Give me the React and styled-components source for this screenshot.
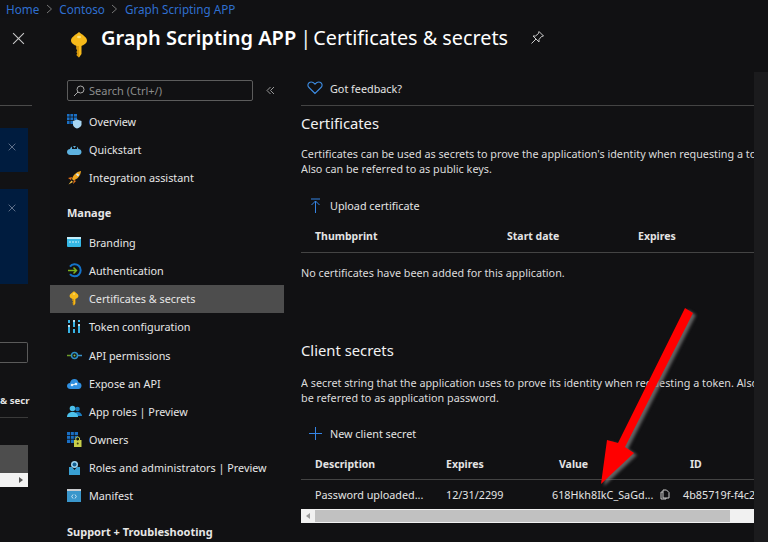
import React from "react";
import styled, { createGlobalStyle } from "styled-components";

const Global = createGlobalStyle`
  html, body { margin: 0; padding: 0; background: #111113; }
  * { box-sizing: border-box; }
`;

const Page = styled.div`
  position: relative;
  width: 768px;
  height: 542px;
  overflow: hidden;
  background: #111113;
  color: #e4e4e4;
  font-family: "Noto Sans", "Open Sans", sans-serif;
  font-size: 10.8px;
  display: flex;
  flex-direction: column;
`;

const Breadcrumb = styled.nav`
  height: 18px;
  padding-left: 6px;
  display: flex;
  align-items: center;
  gap: 6.5px;
  color: #2f6fd0;
  font-size: 11.7px;
  line-height: 18px;
`;
const Chevron = styled.span`
  display: flex;
`;

const Body = styled.div`
  flex: 1;
  min-height: 0;
  display: flex;
`;

const LeftBlade = styled.aside`
  width: 50px;
  flex: none;
  background: #121214;
  padding-right: 22px;
  display: flex;
  flex-direction: column;
`;
const BladeClose = styled.div`
  height: 88px;
  border-bottom: 1px solid #4a4a4a;
  margin-right: -4px;
  padding: 14px 0 0 12px;
  color: #c8c8c8;
`;
const Notice = styled.div`
  height: ${(p) => p.$h}px;
  margin-top: ${(p) => p.$top}px;
  background: #001c3f;
  padding: 11px 0 0 8px;
  color: #8f9bb0;
`;
const BladeInput = styled.div`
  height: 21px;
  margin-top: 58px;
  border: 1px solid #5a5a5a;
  border-left: none;
  border-radius: 0 2px 2px 0;
`;
const BladeHeading = styled.div`
  margin-top: 30px;
  height: 16px;
  line-height: 16px;
  font-weight: 700;
  font-size: 9.6px;
  white-space: nowrap;
`;
const BladeRule = styled.div`
  margin-top: 8px;
  height: 1px;
  background: #3a3a3a;
`;
const BladeGrey = styled.div`
  margin-top: 27px;
  height: 28px;
  background: #4d4d4d;
`;
const BladeScroll = styled.div`
  height: 14px;
  background: #f2f2f2;
  padding-right: 5px;
  display: flex;
  align-items: center;
  justify-content: flex-end;
`;

const Resource = styled.main`
  flex: 1;
  min-width: 0;
  display: flex;
  flex-direction: column;
`;
const TitleRow = styled.header`
  height: 54px;
  padding-left: 20px;
  display: flex;
  align-items: flex-start;
  gap: 13px;
`;
const KeyMark = styled.div`
  margin-top: 14px;
  display: flex;
`;
const Title = styled.h1`
  margin: 4px 0 0;
  font-size: 20px;
  line-height: 32px;
  font-weight: 400;
  color: #fff;
  white-space: nowrap;
  display: flex;
`;
const TitleStrong = styled.span`
  font-weight: 600;
`;
const TitlePipe = styled.span`
  margin-left: 4px;
  color: #e8f2fa;
`;
const TitleLight = styled.span`
  margin-left: 2px;
  font-size: 19.8px;
`;
const PinMark = styled.span`
  display: flex;
  margin-top: 12px;
  margin-left: 9px;
`;

const Columns = styled.div`
  flex: 1;
  min-height: 0;
  display: flex;
`;
const Nav = styled.div`
  width: 234px;
  flex: none;
  padding-top: 8px;
  margin-right: 17px;
`;
const SearchRow = styled.div`
  display: flex;
  align-items: center;
  padding-left: 17px;
  height: 21px;
  margin-bottom: 6px;
`;
const SearchBox = styled.div`
  width: 186px;
  height: 21px;
  border: 1px solid #5c5c5c;
  border-radius: 2px;
  display: flex;
  align-items: center;
  gap: 4px;
  padding-left: 5px;
  color: #8c8c8c;
  font-size: 11px;
`;
const Collapse = styled.span`
  margin-left: 13px;
  display: flex;
`;
const NavRow = styled.div`
  height: 28.15px;
  display: flex;
  align-items: center;
  padding-left: 17px;
  background: ${(p) => (p.$active ? "#4d4d4d" : "transparent")};
  color: #e6e6e6;
  white-space: nowrap;
`;
const NavIcon = styled.span`
  width: 22px;
  flex: none;
  display: flex;
`;
const NavKey = styled.span`
  display: flex;
  margin-left: 2px;
`;
const NavGroup = styled.div`
  padding-left: 17px;
  height: ${(p) => p.$h}px;
  margin-top: ${(p) => p.$top}px;
  font-weight: 700;
  font-size: 11px;
  color: #e6e6e6;
  line-height: 16px;
`;

const Content = styled.section`
  width: 453px;
  flex: none;
  overflow: hidden;
`;
const Feedback = styled.div`
  height: 34px;
  padding: 8px 0 0 6px;
  display: flex;
  align-items: flex-start;
  gap: 7px;
  border-bottom: 1px solid #444;
  line-height: 18px;
`;
const Heading = styled.h2`
  margin: ${(p) => p.$top}px 0 0;
  font-size: 14.8px;
  font-weight: 400;
  line-height: 20px;
  color: #f2f2f2;
`;
const Para = styled.p`
  margin: ${(p) => p.$top}px 0 0;
  line-height: 15px;
  white-space: nowrap;
  color: #dcdcdc;
`;
const Command = styled.div`
  margin-top: ${(p) => p.$top}px;
  height: 20px;
  padding-left: 7px;
  display: flex;
  align-items: center;
  gap: 7px;
  color: #e4e4e4;
`;
const TableRow = styled.div`
  display: grid;
  grid-template-columns: ${(p) => p.$cols};
  align-items: center;
  height: ${(p) => p.$h}px;
  padding-top: ${(p) => (p.$head ? 5 : 0)}px;
  border-bottom: ${(p) => (p.$head ? "1px solid #444" : "none")};
  font-weight: ${(p) => (p.$head ? 700 : 400)};
  font-size: ${(p) => (p.$head ? "10.5px" : "inherit")};
  white-space: nowrap;
  padding-left: 14px;
`;
const ValueCell = styled.span`
  margin-left: -7px;
  display: flex;
  align-items: center;
  gap: 7px;
`;
const IdCell = styled.span`
  margin-left: -7px;
`;
const Empty = styled.div`
  margin-top: 12px;
  line-height: 16px;
  color: #dcdcdc;
`;
const ScrollBar = styled.div`
  height: 14px;
  background: #f1f1f1;
  display: flex;
  align-items: center;
  padding-right: 24px;
`;
const ScrollArrow = styled.span`
  width: 14px;
  display: flex;
  justify-content: center;
`;
const ScrollThumb = styled.div`
  flex: 1;
  height: 12px;
  background: #c1c1c1;
`;
const RightStrip = styled.div`
  flex: 1;
  background: #1b1b1d;
`;

const ArrowOverlay = styled.svg`
  position: absolute;
  left: 595px;
  top: 300px;
  filter: drop-shadow(3px 2px 1.5px rgba(120, 120, 120, 0.8));
`;

const X = ({ s = 12 }) => (
  <svg width={s} height={s} viewBox="0 0 12 12">
    <path d="M1 1l10 10M11 1L1 11" stroke="currentColor" strokeWidth="1" fill="none" />
  </svg>
);

const KeyIcon = ({ s = 14, h = 26 }) => (
  <svg width={s} height={h} viewBox="0 0 18 26">
    <path d="M9 0C12 2.500 17 5 17 8.500 17 11.500 13.500 13 11.500 14V22L9 25.500 6.500 23 7.500 21.500 6.500 20 7.500 18.500 6.500 17V14C4.500 13 1 11.500 1 8.500 1 5 6 2.500 9 0z" fill="#f6b91a" />
    <path d="M9 14V25.500L6.500 23 7.500 21.500 6.500 20 7.500 18.500 6.500 17V14z" fill="#d99a0c" />
    <ellipse cx="9" cy="5" rx="2" ry="1.300" fill="#fbe17a" />
  </svg>
);

const Svg = ({ children }) => (
  <svg width="15" height="15" viewBox="0 0 15 15">{children}</svg>
);

const icons = {
  overview: (
    <Svg>
      <path d="M0 0h10v10H0z" fill="#1a6fc4" />
      <path d="M3 0v11M6.5 0v11M0 3h11M0 6.5h11" stroke="#111113" strokeWidth=".8" />
      <path d="M6 7l4-1.5L14.500 7v3.500c0 2-2.500 3.500-4.500 4-2-.5-4-2-4-4z" fill="#a8d6f2" />
    </Svg>
  ),
  quick: (
    <Svg>
      <path d="M3.500 13C1 13 0 11.500 0 10c0-2 1.500-3 3-3 .5-2 2-3 4.500-3 2 0 3.500 1 4 3 1.500 0 3 1 3 3s-1.500 3-3 3z" fill="#5db2e0" />
      <path d="M5 3l2.500 3L10 3v4H5z" fill="#111113" />
    </Svg>
  ),
  rocket: (
    <Svg>
      <path d="M5 9c1-4 4-7 9-8-.5 5-3.500 8-7.500 9.500z" fill="#f0a61e" />
      <path d="M9 4.500a1.500 1.500 0 1 1 2 2z" fill="#cfe5f5" />
      <path d="M1 8l4-1-1 3zM6 14l1-4 2 1z" fill="#e8731a" />
      <path d="M4.500 10.500L6 12l-4.500 2.500z" fill="#f5c242" />
    </Svg>
  ),
  branding: (
    <Svg>
      <rect y="2" width="14" height="10" rx="1" fill="#35b8e6" />
      <rect y="2" width="14" height="2" fill="#c4eefb" />
      <path d="M2 7h10" stroke="#d7f3fb" strokeDasharray="2 1" />
    </Svg>
  ),
  auth: (
    <Svg>
      <path d="M3 3.500A6 6 0 1 1 3 11" stroke="#1473c9" strokeWidth="2" fill="none" />
      <path d="M1 7.500h8M6.500 4.500l3 3-3 3" stroke="#7eb31e" strokeWidth="1.500" fill="none" />
    </Svg>
  ),
  token: (
    <Svg>
      <path d="M2 1v13M7 1v13M12 1v13" stroke="#37b3e6" strokeWidth="2" />
      <path d="M2 4v2M7 8v2M12 3v2" stroke="#111113" strokeWidth="2" />
      <path d="M2 6v2M7 1v2M12 5v2" stroke="#e8eef2" strokeWidth="1.500" />
    </Svg>
  ),
  perms: (
    <Svg>
      <path d="M0 7.500h5" stroke="#6d9c2a" strokeWidth="1.500" />
      <path d="M10 7.500h5" stroke="#3b92c9" strokeWidth="1.500" />
      <circle cx="7.500" cy="7.500" r="3" fill="none" stroke="#2f8fc4" strokeWidth="1.500" />
      <circle cx="7.500" cy="7.500" r="1" fill="#8cc04a" />
    </Svg>
  ),
  expose: (
    <Svg>
      <path d="M3.500 13C1 13 0 11.500 0 10c0-2 1.500-3 3-3 .5-2.500 2-4 4.500-4 2 0 3.500 1 4 3.500 1.500 0 3 1 3 3.200 0 2-1.500 3.300-3 3.300z" fill="#2f8fe0" />
      <circle cx="5" cy="9" r="1.300" fill="#e4f2fb" />
      <circle cx="9" cy="8" r="1.300" fill="#e4f2fb" />
      <path d="M5 9l4-1" stroke="#e4f2fb" />
    </Svg>
  ),
  roles: (
    <Svg>
      <circle cx="10.500" cy="5" r="2.300" fill="#1a7ec2" />
      <path d="M7 12c0-2.500 1.500-4 3.500-4S15 9.500 15 12z" fill="#1a7ec2" />
      <circle cx="5.500" cy="4.500" r="2.800" fill="#4cc0ea" />
      <path d="M0 13c0-3.500 2.500-5 5.500-5S11 9.500 11 13z" fill="#4cc0ea" />
    </Svg>
  ),
  owners: (
    <Svg>
      <path d="M0 0h11v11H0z" fill="#1a6fc4" />
      <path d="M3.500 0v11M7.300 0v11M0 3.500h11M0 7.300h11" stroke="#111113" strokeWidth=".8" />
      <rect x="7" y="8" width="7.500" height="7" fill="#c8cf4a" />
      <circle cx="10.700" cy="7" r="2" fill="#111113" stroke="#c8cf4a" />
      <circle cx="10.700" cy="11.500" r="1" fill="#3b3b12" />
    </Svg>
  ),
  admins: (
    <Svg>
      <circle cx="7.500" cy="4.500" r="3.500" fill="#9fd4ef" />
      <circle cx="7.500" cy="4.500" r="2" fill="#125f93" />
      <path d="M2 7h3l2.500 3L10 7h3v8H2z" fill="#39a0d3" />
    </Svg>
  ),
  manifest: (
    <Svg>
      <rect y="1" width="14" height="3" fill="#c9ccd0" />
      <rect y="3" width="14" height="11" fill="#3a96cb" />
      <path d="M6 6.500L4.700 8.500 6 10.500M8 6.500l1.300 2-1.300 2" stroke="#e4f2fb" strokeWidth=".8" fill="none" />
    </Svg>
  ),
};

const topItems = [
  ["overview", "Overview"],
  ["quick", "Quickstart"],
  ["rocket", "Integration assistant"],
];
const manageItems = [
  ["branding", "Branding"],
  ["auth", "Authentication"],
  ["key", "Certificates & secrets", true],
  ["token", "Token configuration"],
  ["perms", "API permissions"],
  ["expose", "Expose an API"],
  ["roles", "App roles | Preview"],
  ["owners", "Owners"],
  ["admins", "Roles and administrators | Preview"],
  ["manifest", "Manifest"],
];

const Row = ({ icon, label, active }) => (
  <NavRow $active={active}>
    <NavIcon>
      {icon === "key" ? (
        <NavKey>
          <KeyIcon s={10} h={15} />
        </NavKey>
      ) : (
        icons[icon]
      )}
    </NavIcon>
    {label}
  </NavRow>
);

const Sep = () => (
  <Chevron>
    <svg width="7" height="10" viewBox="0 0 7 10">
      <path d="M1 1l4.500 4L1 9" stroke="#777" fill="none" />
    </svg>
  </Chevron>
);

const SECRET_COLS = "131px 113px 131px 1fr";

export default function App() {
  return (
    <Page>
      <Global />
      <Breadcrumb>
        <span>Home</span>
        <Sep />
        <span>Contoso</span>
        <Sep />
        <span>Graph Scripting APP</span>
      </Breadcrumb>
      <Body>
        <LeftBlade>
          <BladeClose>
            <X s={13} />
          </BladeClose>
          <Notice $h={44} $top={22}>
            <X s={8} />
          </Notice>
          <Notice $h={95} $top={17}>
            <X s={8} />
          </Notice>
          <BladeInput />
          <BladeHeading>&amp; secr</BladeHeading>
          <BladeRule />
          <BladeGrey />
          <BladeScroll>
            <svg width="4" height="6" viewBox="0 0 4 6">
              <path d="M0 0l4 3-4 3z" fill="#555" />
            </svg>
          </BladeScroll>
        </LeftBlade>
        <Resource>
          <TitleRow>
            <KeyMark>
              <KeyIcon s={18} h={26} />
            </KeyMark>
            <Title>
              <TitleStrong>Graph Scripting APP</TitleStrong>
              <TitlePipe>|</TitlePipe>
              <TitleLight>Certificates &amp; secrets</TitleLight>
            </Title>
            <PinMark>
              <svg width="15" height="15" viewBox="0 0 15 15">
                <path d="M9 1.500L13.500 6 11.500 6.500 9 9.500V12L3 6H5.500L8.500 3.500zM6 9L1.500 13.500" stroke="#ccc" fill="none" />
              </svg>
            </PinMark>
          </TitleRow>
          <Columns>
            <Nav>
              <SearchRow>
                <SearchBox>
                  <svg width="12" height="12" viewBox="0 0 12 12">
                    <circle cx="7.500" cy="4.500" r="3.500" stroke="#aaa" fill="none" />
                    <path d="M5 7l-4 4" stroke="#aaa" />
                  </svg>
                  Search (Ctrl+/)
                </SearchBox>
                <Collapse>
                  <svg width="9" height="9" viewBox="0 0 9 9">
                    <path d="M4.500 1L1 4.500 4.500 8M8 1L4.500 4.500 8 8" stroke="#999" fill="none" />
                  </svg>
                </Collapse>
              </SearchRow>
              {topItems.map(([i, l]) => (
                <Row key={l} icon={i} label={l} />
              ))}
              <NavGroup $h={23} $top={14}>Manage</NavGroup>
              {manageItems.map(([i, l, a]) => (
                <Row key={l} icon={i} label={l} active={a} />
              ))}
              <NavGroup $h={16} $top={14}>Support + Troubleshooting</NavGroup>
            </Nav>
            <Content>
              <Feedback>
                <svg width="16" height="15" viewBox="0 0 16 15">
                  <path d="M8 13.500L2 7.500C0 5.500 1 2 4.200 2 6 2 7 3 8 4.200 9 3 10 2 11.800 2 15 2 16 5.500 14 7.500z" stroke="#3d8be0" strokeWidth="1.100" fill="none" />
                </svg>
                Got feedback?
              </Feedback>
              <Heading $top={7}>Certificates</Heading>
              <Para $top={13}>
                Certificates can be used as secrets to prove the application's identity when requesting a token.
                <br />
                Also can be referred to as public keys.
              </Para>
              <Command $top={19}>
                <svg width="15" height="15" viewBox="0 0 15 15">
                  <path d="M3 1h9M7.500 15V3M3.500 7L7.500 3 11.500 7" stroke="#3584e4" fill="none" />
                </svg>
                Upload certificate
              </Command>
              <TableRow $head $cols="192px 131px 1fr" $h={38}>
                <span>Thumbprint</span>
                <span>Start date</span>
                <span>Expires</span>
              </TableRow>
              <Empty>No certificates have been added for this application.</Empty>
              <Heading $top={59}>Client secrets</Heading>
              <Para $top={15}>
                A secret string that the application uses to prove its identity when requesting a token. Also can
                <br />
                be referred to as application password.
              </Para>
              <Command $top={18}>
                <svg width="15" height="15" viewBox="0 0 15 15">
                  <path d="M7.500 1v13M1 7.500h13" stroke="#3584e4" />
                </svg>
                New client secret
              </Command>
              <TableRow $head $cols={SECRET_COLS} $h={37}>
                <span>Description</span>
                <span>Expires</span>
                <span>Value</span>
                <span>ID</span>
              </TableRow>
              <TableRow $cols={SECRET_COLS} $h={29}>
                <span>Password uploaded...</span>
                <span>12/31/2299</span>
                <ValueCell>
                  618Hkh8IkC_SaGd...
                  <svg width="10" height="11" viewBox="0 0 10 11">
                    <path d="M3 1h3.500L9 3.500V9H3zM3 3H1v7h5V9" stroke="#ccc" fill="none" />
                  </svg>
                </ValueCell>
                <IdCell>4b85719f-f4c2</IdCell>
              </TableRow>
              <ScrollBar>
                <ScrollArrow>
                  <svg width="4" height="6" viewBox="0 0 4 6">
                    <path d="M4 0L0 3l4 3z" fill="#999" />
                  </svg>
                </ScrollArrow>
                <ScrollThumb />
              </ScrollBar>
            </Content>
            <RightStrip />
          </Columns>
        </Resource>
      </Body>
      <ArrowOverlay width="110" height="200" viewBox="0 0 110 200">
        <path d="M90 8L23 143 12 140 6 184 39 153 30 147 98 13z" fill="#f00" />
      </ArrowOverlay>
    </Page>
  );
}
